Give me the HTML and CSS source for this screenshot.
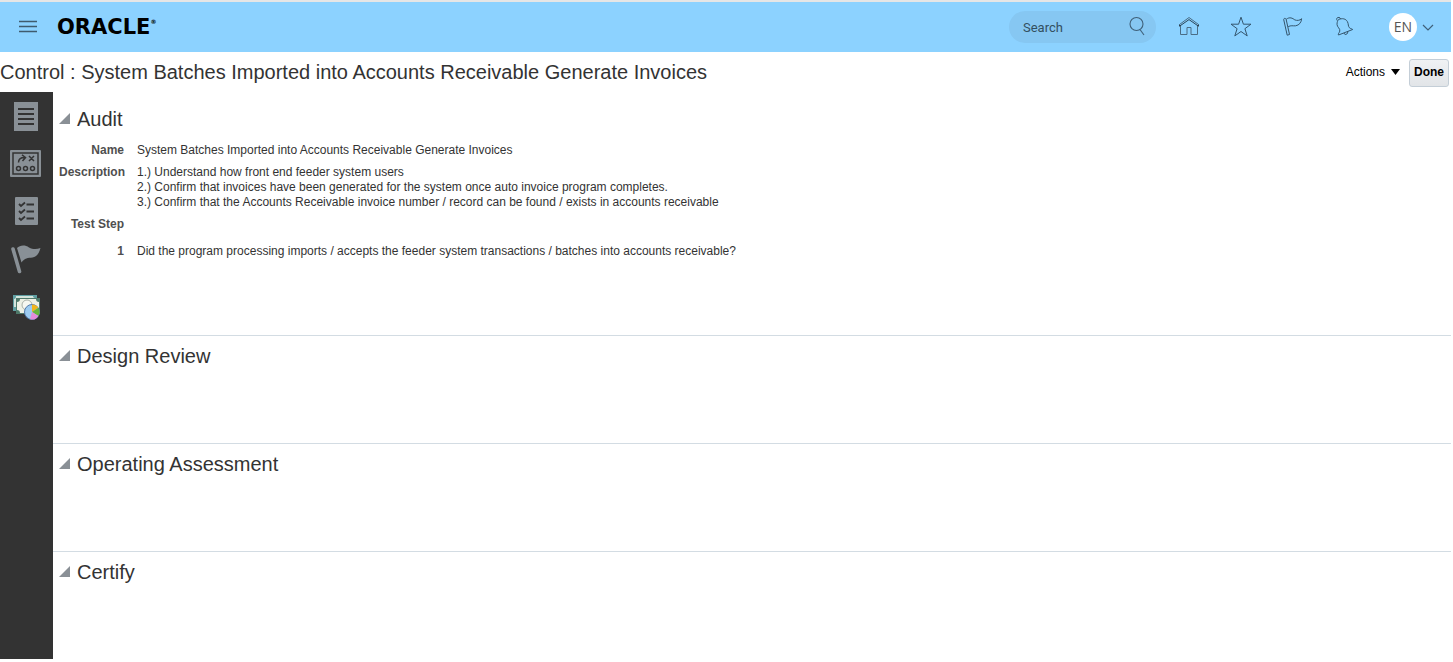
FILE: index.html
```html
<!DOCTYPE html>
<html lang="en">
<head>
<meta charset="utf-8">
<title>Control</title>
<link rel="stylesheet" href="styles.css">
</head>
<body>
<div class="app">
  <header class="topbar">
    <button class="icon-btn menu-btn" type="button" aria-label="Navigator">
      <svg width="20" height="14" viewBox="0 0 20 14" stroke="#3f5b6e" stroke-width="1.4"><path d="M1 1.500h18M1 6.500h18M1 11.500h18"/></svg>
    </button>
    <a class="brand" href="#">ORACLE<span class="brand-mark">®</span></a>
    <div class="search">
      <input class="search-input" type="text" placeholder="Search" aria-label="Search">
      <button class="icon-btn" type="button" aria-label="Run search">
        <svg width="20" height="22" viewBox="0 0 20 22" fill="none" stroke="#3f6079" stroke-width="1.1"><circle cx="9.500" cy="8" r="6.500"/><path d="M13 13.500l4 5.500"/></svg>
      </button>
    </div>
    <nav class="tools">
      <button class="icon-btn" type="button" aria-label="Home">
        <svg width="22" height="22" viewBox="0 0 22 22" fill="none" stroke="#4a6d86" stroke-width="1"><path d="M1.500 8.500l9.500-7 9.500 7M2.500 10v8.500H9v-7h4v7h6.500V10"/><path d="M1.500 8.500v1.700L11 3.600l9.500 6.600V8.500" stroke="#2a4355"/></svg>
      </button>
      <button class="icon-btn" type="button" aria-label="Favorites">
        <svg width="22" height="22" viewBox="0 0 22 22" fill="none" stroke="#34566e" stroke-width="1"><path d="M11 1.200l2.400 7H21l-6.100 4.500 2.300 7.200L11 15.500l-6.200 4.400 2.300-7.200L1 8.200h7.600z"/></svg>
      </button>
      <button class="icon-btn" type="button" aria-label="Watchlist">
        <svg width="22" height="22" viewBox="0 0 22 22" fill="none" stroke="#34566e" stroke-width="1"><path d="M1.800 4c-.6-1.600 1.600-2.300 2.300-.8l3.400 15.300-2.300.7L1.800 4zM4.300 3.200c3.500-2.600 6.300-1 8.500.7 2 .8 5 .8 6.800-1.200-.2 3.600-2.300 6.500-6 7.100-2.600.3-4.800-.7-7.400.9"/></svg>
      </button>
      <button class="icon-btn" type="button" aria-label="Notifications">
        <svg width="22" height="22" viewBox="0 0 22 22" fill="none" stroke="#34566e" stroke-width="1"><path d="M4.800 3.300c3.500-1.300 7-.6 8.600 2.300 1.300 2.500.5 4.500 2 6.100 1.200 1.200 2.500 1 3.300 1.800L4.500 19c-.8-1.300.8-2 1.300-3.900.6-2.500-2.800-4-2.800-6.800 0-2 .7-4.100 1.800-5z"/><path d="M3.200 4.500c-1-1.300-.6-2.700.8-3 1.500-.4 2.700.6 2.800 1.700M10 17c.4 2.300 3.700 2 3.900-1.500"/></svg>
      </button>
    </nav>
    <button class="user-menu" type="button" aria-label="Settings and actions">
      <span class="avatar">EN</span>
      <svg width="12" height="8" viewBox="0 0 12 8" fill="none" stroke="#3f6079" stroke-width="1.200"><path d="M1 2l5 5 5-5"/></svg>
    </button>
  </header>

  <div class="titlebar">
    <h1 class="title">Control : System Batches Imported into Accounts Receivable Generate Invoices</h1>
    <button class="actions-btn" type="button">Actions
      <svg width="10" height="6" viewBox="0 0 10 6"><path d="M0 0h9L4.500 6z" fill="#000"/></svg>
    </button>
    <button class="done-btn" type="button">Done</button>
  </div>

  <div class="body">
    <nav class="sidebar">
      <button class="icon-btn" type="button" aria-label="Details">
        <svg width="32" height="32" viewBox="0 0 32 32"><path d="M4 2h24v29H4z" fill="#899096"/><path d="M8 9h16M8 14h16M8 19h16M8 24h16" stroke="#333" stroke-width="2"/></svg>
      </button>
      <button class="icon-btn" type="button" aria-label="Controls">
        <svg width="32" height="32" viewBox="0 0 32 32" fill="none"><rect x="0" y="2" width="31" height="27" rx="1" fill="#899096"/><rect x="3" y="5" width="25" height="21" stroke="#333" stroke-width="1.500"/><path d="M8.500 14.500c0-3.500 2-5 6-5M12 6.800l3.500 2.700L12.500 13M19 8l5 5M24 8l-5 5" stroke="#333" stroke-width="1.500"/><g stroke="#333" stroke-width="1.500"><circle cx="8.500" cy="20.500" r="2"/><circle cx="15.500" cy="20.500" r="2"/><circle cx="22.500" cy="20.500" r="2"/></g></svg>
      </button>
      <button class="icon-btn" type="button" aria-label="Tests">
        <svg width="32" height="32" viewBox="0 0 32 32" fill="none"><rect x="5" y="1" width="23" height="28" rx="1" fill="#899096"/><path d="M9 8l2 2 4-3.500M9 15l2 2 4-3.500M9 22l2 2 4-3.500M16.500 8.500H24M16.500 15.500H24M16.500 22.500H24" stroke="#333" stroke-width="1.800"/></svg>
      </button>
      <button class="icon-btn" type="button" aria-label="Issues">
        <svg width="32" height="32" viewBox="0 0 32 32"><path d="M3 5l6.500 22.500" stroke="#899096" stroke-width="3.600" stroke-linecap="round"/><path d="M7 4c3-3 8-3.500 12-.5 4 2.200 8 1.800 11.500.5-1.500 5-3.500 9-8 9.500-4.500.4-8 .5-11 5z" fill="#899096"/></svg>
      </button>
      <button class="icon-btn" type="button" aria-label="Analytics">
        <svg width="32" height="32" viewBox="0 0 32 32"><path d="M3 3h24v16H3z" fill="#5f9fa3"/><path d="M6 4h17q0 2 3 2v9H4V7q2 0 2-3z" fill="#d4e4dc"/><path d="M6 6h24v16H6z" fill="#4e796a"/><path d="M10 7h16q0 3 3 3v8q-3 0-3 3H10q0-3-3-3v-8q3 0 3-3z" fill="#edf0e5"/><circle cx="17" cy="13" r="5" fill="#f6f7f1" stroke="#a9b1a9"/><circle cx="22" cy="20" r="7.500" fill="#9ccbf1" stroke="#537aab"/><path d="M22 20v-7.500a7.500 7.500 0 0 1 6.200 3.200z" fill="#f0b51c"/><path d="M22 20l6.200-4.300a7.500 7.500 0 0 1 .2 8.200z" fill="#67b53c"/><path d="M22 20l6.400 3.900A7.500 7.500 0 0 1 20 27.200z" fill="#e58bda"/></svg>
      </button>
    </nav>

    <main class="content">
      <section class="panel panel-audit">
        <h2 class="panel-title"><svg width="11" height="13" viewBox="0 0 11 13"><path d="M11 0v11H0z" fill="#8a9096"/></svg>Audit</h2>
        <dl class="fields">
          <dt>Name</dt>
          <dd>System Batches Imported into Accounts Receivable Generate Invoices</dd>
          <dt>Description</dt>
          <dd>1.) Understand how front end feeder system users<br>2.) Confirm that invoices have been generated for the system once auto invoice program completes.<br>3.) Confirm that the Accounts Receivable invoice number / record can be found / exists in accounts receivable</dd>
          <dt>Test Step</dt>
          <dd></dd>
          <dt class="step">1</dt>
          <dd class="step">Did the program processing imports / accepts the feeder system transactions / batches into accounts receivable?</dd>
        </dl>
      </section>
      <section class="panel">
        <h2 class="panel-title"><svg width="11" height="13" viewBox="0 0 11 13"><path d="M11 0v11H0z" fill="#8a9096"/></svg>Design Review</h2>
      </section>
      <section class="panel">
        <h2 class="panel-title"><svg width="11" height="13" viewBox="0 0 11 13"><path d="M11 0v11H0z" fill="#8a9096"/></svg>Operating Assessment</h2>
      </section>
      <section class="panel">
        <h2 class="panel-title"><svg width="11" height="13" viewBox="0 0 11 13"><path d="M11 0v11H0z" fill="#8a9096"/></svg>Certify</h2>
      </section>
    </main>
  </div>
</div>
</body>
</html>
```
FILE: styles.css
```css
* { box-sizing: border-box; }
body {
  margin: 0;
  background: #fff;
  color: #333;
  font-family: "Liberation Sans", Arial, sans-serif;
  font-size: 12px;
  line-height: 15px;
}
button, input { font: inherit; color: inherit; }
svg { display: block; flex: none; }
.app {
  display: flex;
  flex-direction: column;
  min-height: 100vh;
  padding: 0 2px 3px 0;
}
.icon-btn {
  display: flex;
  padding: 0;
  border: 0;
  background: none;
}
.topbar {
  display: flex;
  align-items: center;
  height: 52px;
  padding: 0 17px 0 18px;
  background: #8cd2ff;
  border-top: 2px solid #e6e6e6;
}
.brand {
  display: flex;
  margin-left: 19px;
  color: #000;
  font-family: "DejaVu Sans", sans-serif;
  font-weight: bold;
  font-size: 21px;
  line-height: 20px;
  text-decoration: none;
}
.brand-mark { font-size: 6px; line-height: 10px; }
.search {
  display: flex;
  align-items: center;
  width: 147px;
  height: 32px;
  margin-left: auto;
  padding: 0 9px 0 14px;
  border-radius: 16px;
  background: #86c7f2;
}
.search-input {
  flex: 1;
  min-width: 0;
  padding: 0;
  border: 0;
  background: none;
  font-family: Roboto, sans-serif;
  font-size: 13px;
}
.search-input::placeholder { color: #33505f; opacity: 1; }
.tools {
  display: flex;
  gap: 30px;
  margin-left: 22px;
}
.user-menu {
  display: flex;
  align-items: center;
  gap: 5px;
  margin-left: 33px;
  padding: 0;
  border: 0;
  background: none;
}
.avatar {
  width: 28px;
  height: 28px;
  border-radius: 50%;
  background: #fff;
  color: #555;
  font-family: "Open Sans", sans-serif;
  font-size: 14px;
  line-height: 28px;
}
.titlebar {
  display: flex;
  align-items: center;
  height: 40px;
  padding-right: 2px;
}
.title {
  flex: 1;
  margin: 0;
  font-size: 20px;
  line-height: 24px;
  font-weight: normal;
}
.actions-btn {
  display: flex;
  align-items: center;
  gap: 6px;
  padding: 0;
  border: 0;
  background: none;
  color: #000;
}
.done-btn {
  height: 28px;
  margin: 1px 0 0 8px;
  padding: 0 4px;
  border: 1px solid #c4ced7;
  border-radius: 3px;
  background: linear-gradient(#f0f2f4, #e2e5e8);
  color: #000;
  font-weight: bold;
}
.body { display: flex; flex: 1; }
.sidebar {
  display: flex;
  flex-direction: column;
  align-items: center;
  gap: 16px;
  width: 53px;
  padding: 8px 2px 0 0;
  background: #333;
}
.content { flex: 1; min-width: 0; }
.panel {
  height: 108px;
  padding: 8px 6px;
  border-top: 1px solid #d3dce3;
}
.panel-audit {
  height: auto;
  min-height: 243px;
  padding-top: 15px;
  border-top: 0;
}
.panel-title {
  display: flex;
  align-items: center;
  gap: 7px;
  margin: 0;
  font-size: 20px;
  line-height: 24px;
  font-weight: normal;
}
.fields {
  display: grid;
  grid-template-columns: 65px 1fr;
  gap: 7px 13px;
  margin: 12px 0 0;
}
.fields dt {
  color: #4f4f4f;
  font-weight: bold;
  text-align: right;
}
.fields dd { margin: 0; }
.fields .step { margin-top: 5px; }
```
